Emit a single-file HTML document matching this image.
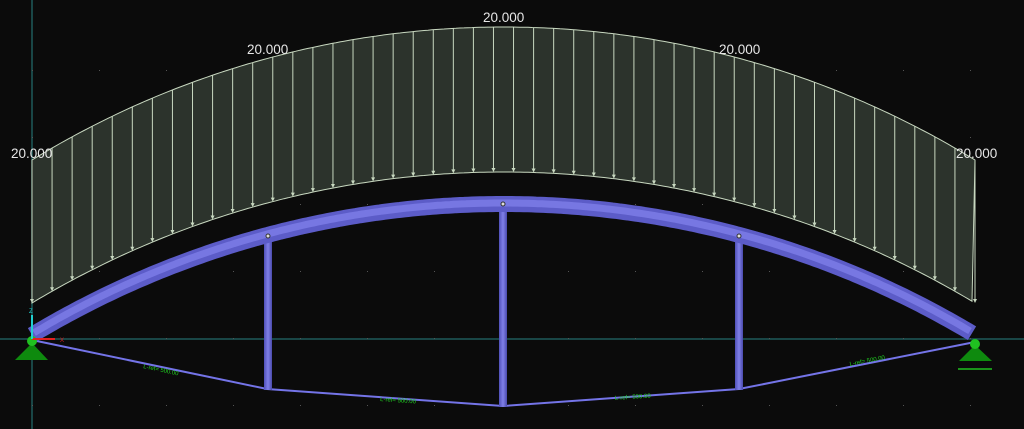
<!DOCTYPE html>
<html><head><meta charset="utf-8"><style>
html,body{margin:0;padding:0;background:#0b0b0b;width:1024px;height:429px;overflow:hidden}
svg{display:block}
text{font-family:"Liberation Sans",sans-serif}
</style></head><body>
<svg id="s" width="1024" height="429" viewBox="0 0 1024 429" xmlns="http://www.w3.org/2000/svg">
<defs>
<linearGradient id="post" x1="0" y1="0" x2="1" y2="0">
<stop offset="0" stop-color="#5050b8"/><stop offset="0.5" stop-color="#8080e8"/><stop offset="1" stop-color="#4a4aac"/>
</linearGradient>
</defs>
<line x1="0" y1="339" x2="1024" y2="339" stroke="#1e5a5a" stroke-width="1.5"/>
<line x1="32" y1="0" x2="32" y2="429" stroke="#1e5a5a" stroke-width="1.5"/>
<g id="dots" fill="#555"></g>
<path id="load" fill="#2c332c" stroke="#c8d8c0" stroke-width="1"/>
<g id="arrows" stroke="#c8d8c0" stroke-width="1" fill="#c8d8c0"></g>
<g fill="#e6e6e6" font-size="13.5">
<text x="11" y="158">20.000</text>
<text x="247" y="54">20.000</text>
<text x="483" y="22">20.000</text>
<text x="719" y="54">20.000</text>
<text x="956" y="158">20.000</text>
</g>
<polyline points="32,340 267,389 503,406 739,389 975,342" fill="none" stroke="#7474e8" stroke-width="2"/>
<rect x="264" y="240" width="8" height="150" fill="url(#post)"/>
<rect x="499" y="208" width="8" height="199" fill="url(#post)"/>
<rect x="735" y="240" width="8" height="150" fill="url(#post)"/>
<path id="arch" fill="none" stroke="#5c5cc8" stroke-width="16" stroke-linecap="butt"/>
<path id="archh" fill="none" stroke="#7e7ee8" stroke-width="7" opacity="0.8"/>
<g fill="#ddd" stroke="#333" stroke-width="1"><circle cx="268" cy="236" r="2"/><circle cx="503" cy="204" r="2"/><circle cx="739" cy="236" r="2"/></g>
<g font-size="6" fill="#20d020">
<text x="143" y="368" transform="rotate(12 143 368)">L-ref= 500.00</text>
<text x="380" y="401" transform="rotate(4 380 401)">L-ref= 500.00</text>
<text x="615" y="400" transform="rotate(-4 615 400)">L-ref= 500.00</text>
<text x="850" y="366" transform="rotate(-11 850 366)">L-ref= 500.00</text>
</g>
<polygon points="15,360 48,360 32,343" fill="#0e8a0e"/>
<circle cx="32" cy="341" r="5" fill="#20c020"/>
<line x1="32" y1="339" x2="55" y2="339" stroke="#e02020" stroke-width="2"/>
<text x="60" y="342" font-size="6" fill="#e02020">X</text>
<line x1="32" y1="339" x2="32" y2="315" stroke="#20d0d0" stroke-width="2"/>
<text x="29" y="313" font-size="6" fill="#20d0d0">Z</text>
<polygon points="959,361 992,361 975,345" fill="#0e8a0e"/>
<circle cx="975" cy="344" r="5" fill="#20c020"/>
<line x1="958" y1="369" x2="992" y2="369" stroke="#20c020" stroke-width="1.5"/>
</svg>
<script>
(function(){
var NS="http://www.w3.org/2000/svg";
function arcY(x,x0,x1,yEnd,sag){var c=(x0+x1)/2,h=(x1-x0)/2,R=(h*h+sag*sag)/(2*sag),cy=yEnd-sag+R;var v=R*R-(x-c)*(x-c);if(v<0)v=0;return cy-Math.sqrt(v);}
function fTop(x){return arcY(x,32,975,160,133);}
function fBot(x){return arcY(x,32,975,303,131);}
function el(name,attrs,parent){var e=document.createElementNS(NS,name);for(var k in attrs)e.setAttribute(k,attrs[k]);parent.appendChild(e);return e;}
var x,d="M32 "+fTop(32).toFixed(1);
for(x=36;x<=972;x+=4)d+=" L"+x+" "+fTop(x).toFixed(1);
d+=" L975 "+fTop(975).toFixed(1);
for(x=972;x>=36;x-=4)d+=" L"+x+" "+fBot(x).toFixed(1);
d+=" L32 "+fBot(32).toFixed(1)+" Z";
document.getElementById("load").setAttribute("d",d);
var g=document.getElementById("arrows");
for(var i=0;i<=47;i++){x=32+i*(943/47);var t=fTop(x),b=fBot(x);
el("line",{x1:x,y1:t,x2:x,y2:b-2},g);
el("polygon",{points:(x-2)+","+(b-4)+" "+(x+2)+","+(b-4)+" "+x+","+b,stroke:"none"},g);}
function am(x){return arcY(x,32,975,335,131);}
var a="M32 335";for(x=36;x<=975;x+=4)a+=" L"+x+" "+am(x).toFixed(1);
document.getElementById("arch").setAttribute("d",a);
var a2="M34 "+(am(34)-1).toFixed(1);for(x=38;x<=973;x+=4)a2+=" L"+x+" "+(am(x)-1).toFixed(1);
document.getElementById("archh").setAttribute("d",a2);
var dg=document.getElementById("dots");
for(x=32;x<1024;x+=67)for(var y=70;y<429;y+=67)el("rect",{x:x,y:y,width:1,height:1},dg);
})();
</script>
</body></html>
